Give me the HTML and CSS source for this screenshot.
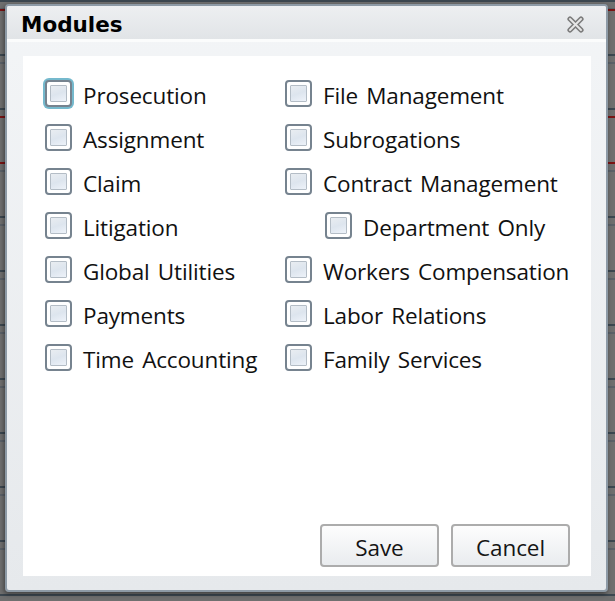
FILE: index.html
```html
<!DOCTYPE html>
<html>
<head>
<meta charset="utf-8">
<title>Modules</title>
<link rel="stylesheet" href="styles.css">
</head>
<body class="page">
<div class="dialog">
  <div class="titlebar">
    <span class="title">Modules</span>
    <span class="close" title="Close">
      <svg width="17" height="17" viewBox="0 0 17 17">
        <path d="M3 3 L14 14 M14 3 L3 14" stroke="#7c7c7c" stroke-width="5.2" stroke-linecap="round" fill="none"/>
        <path d="M3 3 L14 14 M14 3 L3 14" stroke="#e6e6e6" stroke-width="2" stroke-linecap="round" fill="none"/>
      </svg>
    </span>
  </div>
  <div class="dlg-body">
    <div class="panel">
      <div class="options">
        <label class="opt"><span class="cb focus"><span class="cb-in"></span></span><span class="txt">Prosecution</span></label>
        <label class="opt"><span class="cb"><span class="cb-in"></span></span><span class="txt">Assignment</span></label>
        <label class="opt"><span class="cb"><span class="cb-in"></span></span><span class="txt">Claim</span></label>
        <label class="opt"><span class="cb"><span class="cb-in"></span></span><span class="txt">Litigation</span></label>
        <label class="opt"><span class="cb"><span class="cb-in"></span></span><span class="txt">Global Utilities</span></label>
        <label class="opt"><span class="cb"><span class="cb-in"></span></span><span class="txt">Payments</span></label>
        <label class="opt"><span class="cb"><span class="cb-in"></span></span><span class="txt">Time Accounting</span></label>
        <label class="opt"><span class="cb"><span class="cb-in"></span></span><span class="txt">File Management</span></label>
        <label class="opt"><span class="cb"><span class="cb-in"></span></span><span class="txt">Subrogations</span></label>
        <label class="opt"><span class="cb"><span class="cb-in"></span></span><span class="txt">Contract Management</span></label>
        <label class="opt sub"><span class="cb"><span class="cb-in"></span></span><span class="txt">Department Only</span></label>
        <label class="opt"><span class="cb"><span class="cb-in"></span></span><span class="txt">Workers Compensation</span></label>
        <label class="opt"><span class="cb"><span class="cb-in"></span></span><span class="txt">Labor Relations</span></label>
        <label class="opt"><span class="cb"><span class="cb-in"></span></span><span class="txt">Family Services</span></label>
      </div>
      <div class="actions">
        <button class="btn">Save</button>
        <button class="btn">Cancel</button>
      </div>
    </div>
  </div>
</div>
</body>
</html>
```
FILE: styles.css
```css
html, body { margin: 0; padding: 0; }

.page {
  width: 615px;
  height: 601px;
  overflow: hidden;
  background-color: #6f6f6f;
  background-image:
    linear-gradient(to bottom,
      transparent 0, transparent 9px, #7a1414 9px, #7a1414 11px, transparent 11px,
      transparent 116px, #7a1414 116px, #7a1414 118px, transparent 118px,
      transparent 162px, #7a1414 162px, #7a1414 164px, transparent 164px),
    repeating-linear-gradient(to bottom,
      #3c4750 0, #3c4750 2px, transparent 2px, transparent 8px,
      #5b6168 8px, #5b6168 10px, transparent 10px, transparent 54px);
  padding-top: 4px;
  padding-left: 5px;
  box-sizing: border-box;
  font-family: "Open Sans", "Noto Sans", sans-serif;
}

.dialog {
  width: 603px;
  height: 588px;
  box-sizing: border-box;
  border: 2px solid #8d9aa6;
  border-radius: 4px;
  background: linear-gradient(to bottom, #f3f5f7, #e6e9ec);
  box-shadow: -1px 2px 5px rgba(0,0,0,0.45);
  display: flex;
  flex-direction: column;
  overflow: hidden;
}

.titlebar {
  height: 33px;
  flex: none;
  background: linear-gradient(to bottom, #edeff1, #e1e4e7);
  border-bottom: 3px solid #fbfcfc;
  display: flex;
  align-items: center;
  justify-content: space-between;
  padding: 0 22px 0 14px;
}

.title {
  font-family: "DejaVu Sans", Verdana, sans-serif;
  font-weight: bold;
  font-size: 21.5px;
  color: #000;
  line-height: 33px;
  position: relative;
  top: 2px;
}

.close {
  display: flex;
  width: 17px;
  height: 17px;
  position: relative;
  top: 2px;
}

.dlg-body {
  flex: 1;
  padding: 14px 15px 14px 16px;
  display: flex;
}

.panel {
  flex: 1;
  background: #fff;
  display: flex;
  flex-direction: column;
  padding: 15px 21px 9px 22px;
}

.options {
  display: grid;
  grid-template-columns: 240px 1fr;
  grid-template-rows: repeat(7, 44px);
  grid-auto-flow: column;
}

.opt {
  display: flex;
  align-items: center;
  font-size: 22.5px;
  letter-spacing: -0.15px;
  word-spacing: 2.5px;
  white-space: nowrap;
  color: #111;
}

.opt.sub { padding-left: 40px; }

.txt {
  position: relative;
  top: 2px;
}

.cb {
  width: 27px;
  height: 27px;
  box-sizing: border-box;
  border: 2px solid #76838f;
  border-radius: 4px;
  background: #fff;
  padding: 3px;
  margin-right: 11px;
  flex: none;
  display: flex;
}

.cb.focus {
  box-shadow: 0 0 0 2px #75b9cd;
}

.cb-in {
  flex: 1;
  border: 1px solid #b4bdc6;
  border-radius: 1px;
  background: linear-gradient(160deg, #e9edf1 0%, #dde5ee 50%, #edf2f9 100%);
}

.actions {
  margin-top: auto;
  display: flex;
  justify-content: flex-end;
  gap: 12px;
}

.btn {
  width: 119px;
  height: 43px;
  box-sizing: border-box;
  border: 2px solid #acacac;
  border-radius: 4px;
  background: linear-gradient(to bottom, #fdfdfd, #e9ecef);
  font-family: "Open Sans", "Noto Sans", sans-serif;
  font-size: 22.5px;
  letter-spacing: -0.1px;
  color: #151515;
  padding: 5px 0 0 0;
  line-height: 1;
}
```
